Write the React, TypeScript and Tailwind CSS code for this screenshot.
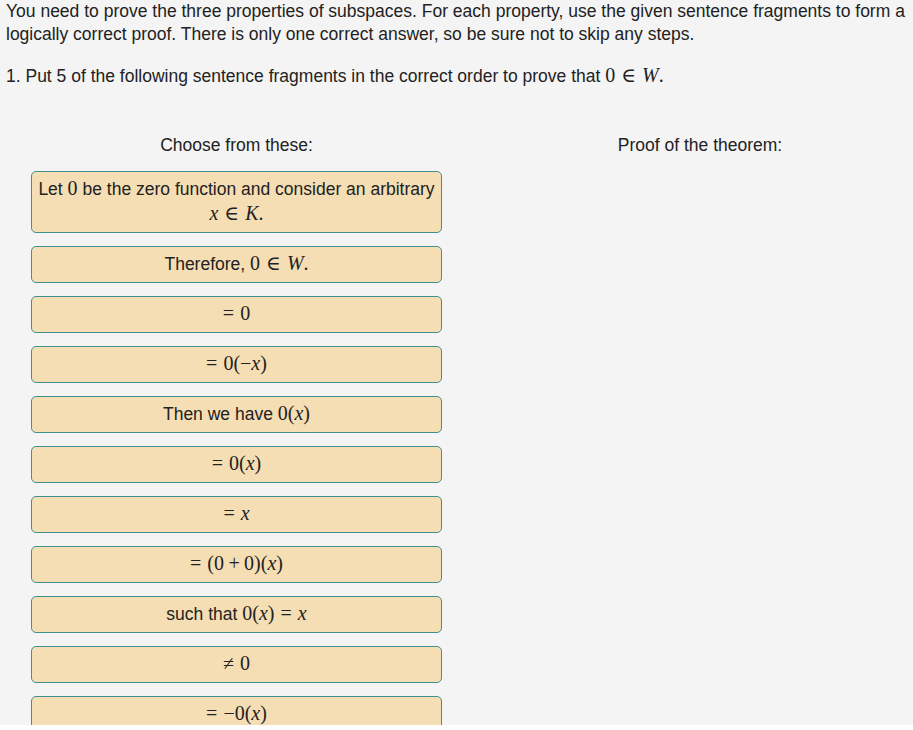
import type { ReactNode } from "react";

// Math pieces: serif face, italic variables, spaced relations/operators
function M({ children }: { children: ReactNode }) {
    return (
        <span className="whitespace-nowrap text-[20px] leading-none [font-family:'Liberation_Serif','DejaVu_Serif',serif]">
            {children}
        </span>
    );
}

function V({ children }: { children: ReactNode }) {
    return <span className="italic">{children}</span>;
}

function Rel({ children, lead = false }: { children: ReactNode; lead?: boolean }) {
    return <span className={lead ? "mr-[0.3em]" : "mx-[0.3em]"}>{children}</span>;
}

function Bin({ children }: { children: ReactNode }) {
    return <span className="mx-[0.22em]">{children}</span>;
}

const fragments: ReactNode[] = [
    <>
        Let <M>0</M> be the zero function and consider an arbitrary{" "}
        <M>
            <V>x</V>
            <Rel>∈</Rel>
            <V>K</V>.
        </M>
    </>,
    <>
        Therefore,{" "}
        <M>
            0<Rel>∈</Rel>
            <V>W</V>.
        </M>
    </>,
    <M>
        <Rel lead>=</Rel>0
    </M>,
    <M>
        <Rel lead>=</Rel>0(−<V>x</V>)
    </M>,
    <>
        Then we have{" "}
        <M>
            0(<V>x</V>)
        </M>
    </>,
    <M>
        <Rel lead>=</Rel>0(<V>x</V>)
    </M>,
    <M>
        <Rel lead>=</Rel>
        <V>x</V>
    </M>,
    <M>
        <Rel lead>=</Rel>(0<Bin>+</Bin>0)(<V>x</V>)
    </M>,
    <>
        such that{" "}
        <M>
            0(<V>x</V>)<Rel>=</Rel>
            <V>x</V>
        </M>
    </>,
    <M>
        <Rel lead>≠</Rel>0
    </M>,
    <M>
        <Rel lead>=</Rel>−0(<V>x</V>)
    </M>,
];

export default function App() {
    return (
        <div className="h-[725px] overflow-hidden bg-[#f4f4f4] text-[17.5px] leading-[23px] text-[#222] [font-family:'Liberation_Sans',Arial,sans-serif]">
            <p className="pl-[6px] pr-[4px]">
                You need to prove the three properties of subspaces. For each property, use the given sentence fragments to form a
                logically correct proof. There is only one correct answer, so be sure not to skip any steps.
            </p>
            <p className="mt-[19px] pl-[6px]">
                1. Put 5 of the following sentence fragments in the correct order to prove that{" "}
                <M>
                    0<Rel>∈</Rel>
                    <V>W</V>.
                </M>
            </p>

            <div className="mt-[46px] flex">
                {/* available fragments */}
                <div className="w-[473px] px-[31px]">
                    <div className="text-center">Choose from these:</div>
                    <div className="mt-[14px] flex flex-col gap-[13px]">
                        {fragments.map((f, i) => (
                            <div
                                key={i}
                                className="rounded-[5px] border border-[#3f9191] bg-[#f5deb3] px-[3px] py-[5px] text-center leading-[25px]"
                            >
                                {f}
                            </div>
                        ))}
                    </div>
                </div>

                {/* drop target */}
                <div className="flex-1 pl-[14px] text-center">Proof of the theorem:</div>
            </div>
        </div>
    );
}
